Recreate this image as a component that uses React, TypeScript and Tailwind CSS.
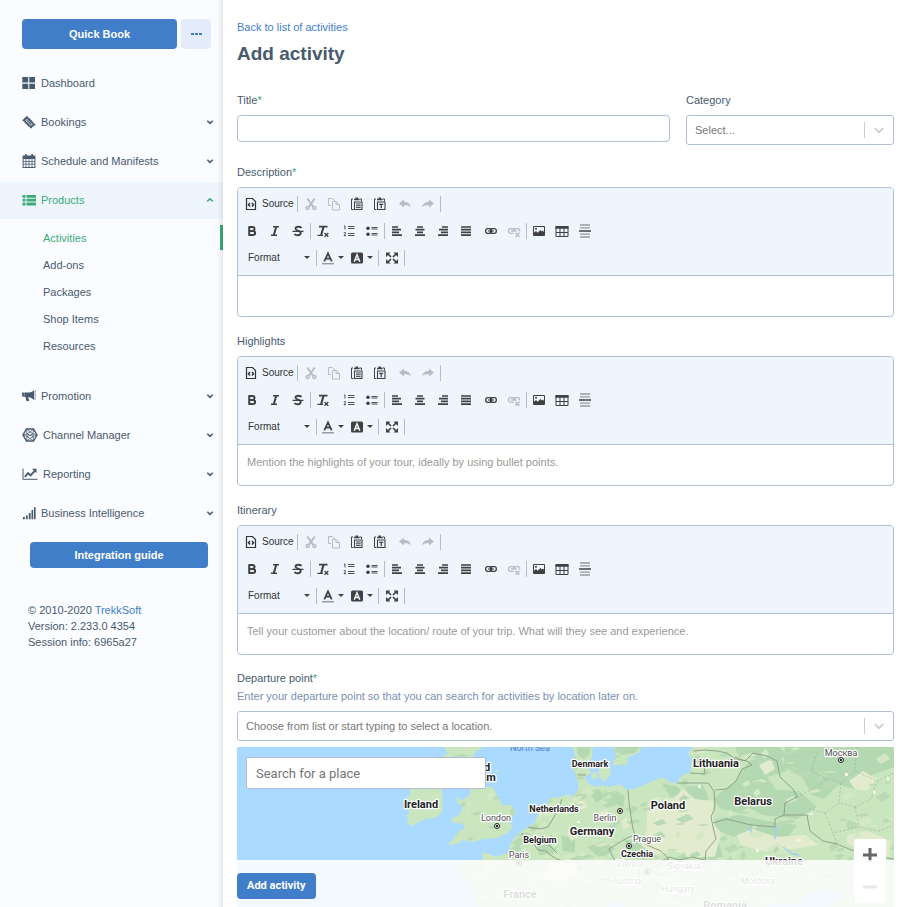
import React from "react";

type IconProps = { children: React.ReactNode; size?: string; box?: string };

const Glyph = ({ children, size = "h-3.5 w-3.5", box = "0 0 14 14" }: IconProps) => (
  <svg viewBox={box} className={`${size} shrink-0`} fill="currentColor" aria-hidden="true">
    {children}
  </svg>
);

const Chevron = ({ up = false }: { up?: boolean }) => (
  <svg viewBox="0 0 8 8" className="h-2 w-2 shrink-0" fill="none" stroke="currentColor" strokeWidth="1.5" aria-hidden="true">
    <path d={up ? "M1.3 5.4 4 2.8l2.7 2.6" : "M1.3 2.8 4 5.4l2.7-2.6"} />
  </svg>
);

/* ---------- sidebar icons ---------- */

const DashboardIcon = () => (
  <Glyph>
    <path d="M.3 1h5.900v5.500H.3zM7.300 1H13v5.500H7.300zM.3 7.700h5.900V13H.3zM7.300 7.700H13V13H7.300z" />
  </Glyph>
);

const TicketIcon = () => (
  <Glyph>
    <path
      fillRule="evenodd"
      d="M5.200 .8 .3 5.200l1 1.200c.8-.3 1.500.5 1.100 1.200L9 13.600l1.200-.9c-.3-.8.5-1.500 1.200-1.100l2.200-2L12.500 8.500c-.8.3-1.500-.4-1.100-1.200L7.200 3c-.8.3-1.400-.4-1.100-1.100zM5 3.900 3.300 5.400l5.600 5.400 1.800-1.600z"
    />
    <path d="M5.200 4.800 4.300 5.600 8.900 10l1-.9z" />
  </Glyph>
);

const CalendarIcon = () => (
  <Glyph>
    <path
      fillRule="evenodd"
      d="M3 0h1.600v1.500h4.800V0H11v1.500h2.400V14H.6V1.500H3zM1.600 5v2h2V5zm2.800 0v2h2.200V5zm3 0v2h2.200V5zm3 0v2h2V5zM1.600 7.800v2h2v-2zm2.800 0v2h2.200v-2zm3 0v2h2.200v-2zm3 0v2h2v-2zM1.600 10.600v2.300h2v-2.300zm2.800 0v2.300h2.200v-2.300zm3 0v2.300h2.200v-2.300zm3 0v2.300h2v-2.300z"
    />
  </Glyph>
);

const ListIcon = () => (
  <Glyph>
    <path d="M.5 2h3v2.800h-3zM4.500 2H14v2.800H4.500zM.5 5.800h3v2.800h-3zM4.500 5.800H14v2.800H4.500zM.5 9.600h3v2.800h-3zM4.500 9.600H14v2.800H4.500z" />
  </Glyph>
);

const MegaphoneIcon = () => (
  <Glyph>
    <path d="M0 4.400c0-.6.4-.9.9-.9h1v4.200h-1c-.5 0-.9-.3-.9-.9zM2.300 3.500h3.300C8.300 3.500 10.500 2.600 12 1.200v9.800C10.500 9.600 8.600 8.300 6.200 8l.3 1.600.8 1.800c-1 1-2.500.9-3 .3L3.500 8H2.300z" />
    <path d="M12.600 1h1v10.300h-1z" opacity=".6" />
  </Glyph>
);

const NetworkIcon = () => (
  <svg viewBox="0 0 16 14" className="h-3.5 w-4 shrink-0" fill="none" stroke="currentColor" aria-hidden="true">
    <path strokeWidth="1.400" d="M4.500 1h7L15 7l-3.500 6h-7L1 7z" />
    <path
      strokeWidth=".8"
      d="M4.500 1 8 4l3.500-3M15 7l-4-1.200L11.500 1M15 7l-4 1.500.5 4.500L8 10.500 4.500 13 5 8.500 1 7l4-1.200L4.500 1M5 5.800 8 4l3 1.800v2.700l-3 2-3-2zM5 5.800l6 2.700M11 5.800l-6 2.700"
    />
  </svg>
);

const LineChartIcon = () => (
  <svg viewBox="0 0 16 14" className="h-3.5 w-4 shrink-0" fill="none" stroke="currentColor" aria-hidden="true">
    <path d="M1 1.500v10.800h14.500" />
    <path strokeWidth="1.900" d="m2.800 9.800 3.400-3.600 2.300 2.200 4.300-4.500" />
    <path fill="currentColor" stroke="none" d="M10 1.800H14.500v4.500z" />
  </svg>
);

const SignalIcon = () => (
  <Glyph>
    <path d="M1 11h1.800v2.300H1zM3.900 9.500h1.800v3.800H3.900zM6.800 7h1.800v6.300H6.800zM9.500 4h1.700v9.300H9.500zM12 1.200h1.600v12.100H12z" />
  </Glyph>
);

/* ---------- sidebar ---------- */

type NavItem = { label: string; icon: React.ReactNode; leaf?: boolean };

const TOP_ITEMS: NavItem[] = [
  { label: "Dashboard", icon: <DashboardIcon />, leaf: true },
  { label: "Bookings", icon: <TicketIcon /> },
  { label: "Schedule and Manifests", icon: <CalendarIcon /> },
];

const LOWER_ITEMS: NavItem[] = [
  { label: "Promotion", icon: <MegaphoneIcon /> },
  { label: "Channel Manager", icon: <NetworkIcon /> },
  { label: "Reporting", icon: <LineChartIcon /> },
  { label: "Business Intelligence", icon: <SignalIcon /> },
];

const PRODUCT_ITEMS = ["Add-ons", "Packages", "Shop Items", "Resources"];

const NavRow = ({ item }: { item: NavItem }) => (
  <li>
    <a href="#" className="flex h-[37px] items-center pr-[9px] pb-0.5 pl-[22px]">
      {item.icon}
      <span className="ml-[5px] flex-1">{item.label}</span>
      {!item.leaf && <Chevron />}
    </a>
  </li>
);

const Sidebar = () => (
  <aside className="relative w-[223px] shrink-0 bg-[#fbfcff] pt-[19px]">
    <div className="flex gap-1 pr-3 pl-[22px]">
      <button className="h-[30px] flex-1 rounded bg-[#407ec9] font-bold text-white">Quick Book</button>
      <button aria-label="More" className="flex h-[30px] w-[30px] items-center justify-center gap-px rounded bg-[#e4ebfa] text-[#407ec9]">
        <span className="h-0.5 w-[3px] bg-current" />
        <span className="h-0.5 w-[3px] bg-current" />
        <span className="h-0.5 w-[3px] bg-current" />
      </button>
    </div>
    <nav className="mt-4">
      <ul className="flex flex-col gap-0.5">
        {TOP_ITEMS.map((item) => (
          <NavRow key={item.label} item={item} />
        ))}
        <li className="text-[#3dab78]">
          <a href="#" className="flex h-[37px] items-center bg-[#eef5fd] pr-[9px] pb-0.5 pl-[22px]">
            <ListIcon />
            <span className="ml-[5px] flex-1">Products</span>
            <Chevron up />
          </a>
          <ul className="flex flex-col gap-0.5 pt-1.5 pb-[18px]">
            <li>
              <a href="#" className="flex h-[25px] items-center border-r-[3px] border-[#3dab78] pl-[43px]">
                Activities
              </a>
            </li>
            {PRODUCT_ITEMS.map((label) => (
              <li key={label}>
                <a href="#" className="flex h-[25px] items-center pl-[43px] text-[#485a6e]">
                  {label}
                </a>
              </li>
            ))}
          </ul>
        </li>
        {LOWER_ITEMS.map((item) => (
          <NavRow key={item.label} item={item} />
        ))}
      </ul>
    </nav>
    <div className="mt-[10px] pr-[15px] pl-[30px]">
      <button className="h-[26px] w-full rounded bg-[#407ec9] font-bold text-white">Integration guide</button>
    </div>
    <div className="mt-[34px] pl-7">
      <p>
        © 2010-2020{" "}
        <a href="#" className="text-[#407ec9]">
          TrekkSoft
        </a>
      </p>
      <p>Version: 2.233.0 4354</p>
      <p>Session info: 6965a27</p>
    </div>
    <div className="pointer-events-none absolute inset-y-0 right-0 w-1.5 bg-linear-to-r from-transparent to-black/8" />
  </aside>
);

/* ---------- editor toolbar ---------- */

const Tool = ({ label, off = false, children }: { label: string; off?: boolean; children: React.ReactNode }) => (
  <button
    type="button"
    aria-label={label}
    className={`flex h-[23px] w-[23px] items-center justify-center ${off ? "opacity-30" : ""}`}
  >
    {children}
  </button>
);

const Divider = () => <span className="ml-px h-4 w-px bg-[#bcbcbc]" />;

const Caret = () => <span className="border-x-[3px] border-t-[3px] border-x-transparent border-t-current" />;

const I = ({ children }: { children: React.ReactNode }) => (
  <svg viewBox="0 0 14 14" className="h-3.5 w-3.5" fill="none" stroke="currentColor" aria-hidden="true">
    {children}
  </svg>
);

const Lines = ({ d }: { d: string }) => (
  <I>
    <path d={d} strokeWidth="1.700" />
  </I>
);

const Clipboard = ({ children }: { children: React.ReactNode }) => (
  <I>
    <path d="M3 2H1.500v10.500H3.500M9.500 2H11.500v2" />
    <path d="M4 2.500h5.500M5.500 1.200h2.500" strokeWidth="1.600" />
    <path d="M4.500 5h7.500v7.500H4.500z" strokeWidth="1.100" />
    {children}
  </I>
);

const Arrow = () => <path d="M1 6.500 6 2.600v2.400c4 0 6 1.500 7 5.200C11.500 8.500 9 8.200 6 8.200v2.400z" fill="currentColor" stroke="none" />;

const Toolbar = ({ id }: { id: string }) => (
  <div className="border-b border-[#b0bfd6] bg-[#eef5fd] pt-0.5 pb-1 pl-0.5 text-[#404040]">
    <div className="flex h-[27px] items-center">
      <button type="button" className="flex h-[23px] w-14 items-center gap-1 pl-1 text-[#333]">
        <I>
          <path d="M2.500 1.500h6l3 3v8h-9z" strokeWidth="1.200" />
          <path d="M6 6 4.500 7.700 6 9.400M8 6l1.500 1.700L8 9.400" strokeWidth="1.500" />
        </I>
        <span className="text-[10px]">Source</span>
      </button>
      <Divider />
      <span className="w-px" />
      <Tool label="Cut" off>
        <I>
          <path d="m3.300 1.500 6 8.500M10.700 1.500l-6 8.500" strokeWidth="2" />
          <circle cx="3.600" cy="11" r="1.500" strokeWidth="1.500" />
          <circle cx="10.400" cy="11" r="1.500" strokeWidth="1.500" />
        </I>
      </Tool>
      <Tool label="Copy" off>
        <I>
          <path d="M4 8.500H1.500v-7h4L8 4M5.500 4.500H9L12.500 7.500v5.500H5.500zM9 4.500v3h3" />
        </I>
      </Tool>
      <Tool label="Paste">
        <Clipboard>
          <path d="M6 7h4.700M6 8.800h4.700M6 10.600h4.700" />
        </Clipboard>
      </Tool>
      <Tool label="Paste as plain text">
        <Clipboard>
          <path d="M6.200 7.300h4M8.200 7.300v4" strokeWidth="1.300" />
        </Clipboard>
      </Tool>
      <span className="w-0.5" />
      <Tool label="Undo" off>
        <I>
          <Arrow />
        </I>
      </Tool>
      <Tool label="Redo" off>
        <I>
          <g transform="matrix(-1 0 0 1 14 0)">
            <Arrow />
          </g>
        </I>
      </Tool>
      <Divider />
    </div>

    <div className="flex h-[27px] items-center">
      <Tool label="Bold">
        <I>
          <path d="M4.200 2.300v9.400M4 3h3.500c2.700 0 2.700 3.900 0 3.900H4M4 11h3.800c3.200 0 3.200-4.100 0-4.100" strokeWidth="2" />
        </I>
      </Tool>
      <Tool label="Italic">
        <I>
          <path d="M5 2.700h6M3 11.300h6" strokeWidth="1.400" />
          <path d="M8.200 3 5.800 11" strokeWidth="2" />
        </I>
      </Tool>
      <Tool label="Strikethrough">
        <I>
          <path d="M10.500 4C9.500 2.200 4.700 2.200 4.500 4.600 4.400 6.800 9.900 6.500 9.700 9.200 9.500 11.900 4.600 11.700 3.500 9.900" strokeWidth="1.900" />
          <path d="M1.500 7.300h11" strokeWidth="1.300" />
        </I>
      </Tool>
      <Divider />
      <Tool label="Remove format">
        <I>
          <path d="M3 2.700h8.500" strokeWidth="1.800" />
          <path d="M7.500 2.700 5.200 11" strokeWidth="2.100" />
          <path d="M1.500 11.300H7" strokeWidth="1.300" />
          <path d="m8.500 9 3.800 3.800M12.300 9l-3.800 3.800" strokeWidth="1.300" />
        </I>
      </Tool>
      <span className="w-[3px]" />
      <Tool label="Numbered list">
        <I>
          <path d="M6 2.500h6.500M6 4.500h6.500M6 9.500h6.500M6 11.500h6.500" strokeWidth=".9" />
          <path d="M2 2h1v3.500M1.800 8.700h1.700v1L2 11.700h2" strokeWidth=".9" />
        </I>
      </Tool>
      <Tool label="Bulleted list">
        <I>
          <path d="M6.500 3.500h6M6.500 5h6M6.500 9.500h6M6.500 11h6" strokeWidth=".9" />
          <circle cx="3" cy="4.200" r="1.800" fill="currentColor" stroke="none" />
          <circle cx="3" cy="10.200" r="1.800" fill="currentColor" stroke="none" />
        </I>
      </Tool>
      <Divider />
      <Tool label="Align left">
        <Lines d="M2 3h6M2 5.700h9M2 8.400h7M2 11.100h10" />
      </Tool>
      <Tool label="Center">
        <Lines d="M4 3h6M2.500 5.700h9M4 8.400h6M2 11.100h10" />
      </Tool>
      <Tool label="Align right">
        <Lines d="M6 3h6M3 5.700h9M5 8.400h7M2 11.100h10" />
      </Tool>
      <Tool label="Justify">
        <Lines d="M2 3h10M2 5.700h10M2 8.400h10M2 11.100h10" />
      </Tool>
      <span className="w-0.5" />
      <Tool label="Link">
        <I>
          <rect x="1.700" y="4.700" width="6" height="4.600" rx="2" strokeWidth="1.300" />
          <rect x="6.300" y="4.700" width="6" height="4.600" rx="2" strokeWidth="1.300" />
          <path d="M4 7h6" strokeWidth="1.200" />
        </I>
      </Tool>
      <Tool label="Unlink" off>
        <I>
          <path d="M6.500 9.300H3.700a2 2 0 0 1 0-4.600h2a2 2 0 0 1 2 2M6.500 6.700a2 2 0 0 1 2-2h2a2 2 0 0 1 2 2.800M4 7h5.500" strokeWidth="1.300" />
          <path d="m8.500 8.800 4 4M12.500 8.800l-4 4" strokeWidth="1.500" />
        </I>
      </Tool>
      <Divider />
      <Tool label="Image">
        <I>
          <path d="M1.500 2.500h11v9h-11z" />
          <path d="M2 11.500V8.800L4 7l1.700 1.700L8.500 6l1.200 1.500L11 6.500l1 1.500v3.500z" fill="currentColor" stroke="none" />
          <circle cx="4" cy="4.800" r="1" fill="currentColor" stroke="none" />
        </I>
      </Tool>
      <Tool label="Table">
        <I>
          <path d="M1 2.500h12v10H1zM5 4v8.500M9 4v8.500M1 8.500h12" />
          <path d="M.5 3.300h13" strokeWidth="2.800" />
        </I>
      </Tool>
      <Tool label="Horizontal line">
        <I>
          <path d="M2 1h10M2 3.800h10M2 10.200h10M2 13h10" strokeWidth="1.300" opacity=".5" />
          <path d="M1 7h12" strokeWidth="1.500" />
        </I>
      </Tool>
    </div>

    <div className="flex h-[27px] items-center">
      <div className="relative w-[75px]">
        <select aria-label={`${id} paragraph format`} className="block w-full appearance-none bg-transparent pl-2 text-[10px] text-[#333]">
          <option>Format</option>
        </select>
        <span className="pointer-events-none absolute inset-y-0 right-[5px] flex items-center">
          <Caret />
        </span>
      </div>
      <Divider />
      <button type="button" aria-label="Text color" className="flex h-[23px] w-[29px] items-center justify-end gap-[3px] pr-0.5">
        <I>
          <path d="m3.300 10.300 3.700-8 3.700 8M4.800 7.600h4.400" strokeWidth="1.700" />
          <path d="M1 12.700h12" strokeWidth="1.400" opacity=".5" />
        </I>
        <Caret />
      </button>
      <button type="button" aria-label="Background color" className="flex h-[23px] w-[29px] items-center justify-end gap-[3px] pr-0.5">
        <I>
          <rect x="1" y="1.500" width="12" height="11" rx="1.500" fill="currentColor" stroke="none" />
          <path d="m4.200 10.700 2.800-7 2.800 7M5.300 8.500h3.400" stroke="#eef5fd" strokeWidth="1.500" />
        </I>
        <Caret />
      </button>
      <span className="w-0.5" />
      <Divider />
      <span className="w-px" />
      <Tool label="Maximize">
        <I>
          <path d="m2.500 2.500 3.500 3.500M11.500 2.500 8 6M2.500 11.500 6 8M11.500 11.500 8 8" strokeWidth="1.700" />
          <path d="M1 1.500h4.500L1 6zM13 1.500V6L8.500 1.500zM1 12.500V8l4.500 4.500zM13 12.500H8.500L13 8z" fill="currentColor" stroke="none" />
        </I>
      </Tool>
      <Divider />
    </div>
  </div>
);

const Star = () => <span className="text-[#3dab78]">*</span>;

const EditorField = ({ id, label, required = false, hint }: { id: string; label: string; required?: boolean; hint?: string }) => (
  <div>
    <label htmlFor={id} className="mb-[7px] block">
      {label}
      {required && <Star />}
    </label>
    <div className="overflow-hidden rounded border border-[#b0bfd6]">
      <Toolbar id={label} />
      <textarea
        id={id}
        placeholder={hint}
        className="block h-10 w-full resize-none px-[9px] py-[9px] leading-4 outline-none placeholder:text-[#999]"
      />
    </div>
  </div>
);

const SelectBox = ({ id, text }: { id: string; text: string }) => (
  <div className="relative">
    <select id={id} className="block h-[30px] w-full appearance-none rounded-[3px] border border-[#b0bfd6] bg-white pl-2 text-[#777]">
      <option>{text}</option>
    </select>
    <span className="pointer-events-none absolute inset-y-0 right-px flex items-center text-[#ccc]">
      <span className="h-4 w-px bg-current" />
      <svg viewBox="0 0 12 12" className="mx-2 h-3 w-3" fill="none" stroke="currentColor" strokeWidth="1.700" aria-hidden="true">
        <path d="M1.700 4 6 8.200 10.300 4" />
      </svg>
    </span>
  </div>
);

/* ---------- map ---------- */

const LAND = [
  "M207 0 211 6 206 9 217 19 240 14 236 7 246 0z",
  "M234 40 233 47 226 53 219 50 221 57 226 59 223 67 215 71 214 75 226 77 228 81 222 84 217 91 210 98 220 97 226 93 236 95 246 92 260 91 271 86 276 79 272 76 278 66 275 58 265 58 261 50 256 40z",
  "M173 40 173 48 169 50 175 55 168 60 173 65 168 70 173 72 169 75 175 79 186 73 200 70 205 65 206 53 204 40z",
  "M245 105 250 106 258 110 272 106 273 98 277 91 283 85 291 80 298 75 301 68 305 60 310 58 312 51 323 50 333 47 334 52 341 43 341 36 338 26 335 20 338 8 336 0 356 0 355 10 351 18 354 26 348 30 352 37 360 40 365 38 373 40 383 37 390 43 400 41 413 35 426 30 432 35 440 36 445 28 453 26 455 13 451 6 456 0 657 0 657 240 245 240 241 160 238 150 233 136 221 130 226 124 219 117 230 113 246 113z",
  "M376 0 379 8 375 18 390 18 391 10 401 6 406 0z",
  "M361 23 371 17 374 24 372 30 366 35 362 29zM354 26 360 25 360 32 355 32zM258 24 260 22 262 26zM311 46 314 44 314 46z",
];

const FOREST = [
  "M340 0l14 0-2 8-6 4-5-4zM377 0l25 0-4 6-14 2zM352 44l10-2 6 8-9 6zM374 46l14 2-2 12-10-4z",
  "M425 36l16 4 6 8-14 2zM448 40l18-2 6 14-16 6zM427 58l9-6 6 10-10 4z",
  "M476 52l22-18 14-20 30-8 8 18-20 6 10 14-22 10-14 12-20-4zM498 0l44 0 10 10-24 2-26-2z",
  "M548 0l109 0 0 20-22 8-16 14-18-4-14 14-12-4-10-18-18-10zM528 42l34 2 18 16-20 12-34-4-16-8z",
  "M478 72l24-4 28 6 30 4-10 14-24-6-30 4-18-8z",
  "M300 96l12-6 10 8-8 12-12-2zM324 88l14 4 0 14-12-2zM350 100l16-6 12 8-14 10zM386 92l22 4 12 14-20 2z",
  "M466 96l16 0 4 14-22 2z",
];

const FIELDS = [
  "M410 58l10-8 16 2 10-10 12 10 18 2 0 22 8 10-6 24-26 0-14-6-22 4-12-10 6-16z",
  "M330 86l6-4 6 8-8 4zM360 66l10-4 2 8-9 2zM340 54l8 0 2 7-8 2zM384 74l6-4 2 10-6 2z",
  "M500 88l16-6 22 8 30-2 14 10-26 4-30 2-22-6zM610 88l20-4 24 10-2 16-22-2-20-12z",
  "M612 34l14-10 14 8-10 12-12-2zM522 18l12-6 4 10-10 6zM312 116l20-4 14 10-22 14-18-6z",
];

/* Small irregular patches of vegetation, the same on every render. */
const speckles = (seed: number, count: number) => {
  let s = seed;
  const next = () => {
    s = (s * 16807) % 2147483647;
    return s / 2147483647;
  };
  const parts: string[] = [];
  for (let i = 0; i < count; i++) {
    const x = Math.round(215 + next() * 440);
    const y = Math.round(next() * 160);
    const w = Math.round(3 + next() * 9);
    const h = Math.round(1 + next() * 5);
    parts.push(`M${x} ${y}l${w} ${-h} ${Math.round(w / 2)} ${h} ${-w} ${Math.round(h * 0.8)}z`);
  }
  return parts.join("");
};

const DARK_SPECKLES = speckles(4127, 190);
const LIGHT_SPECKLES = speckles(9311, 90);

type Place = { name: string; x: number; y: number; size: number; country?: boolean };

const PLACES: Place[] = [
  { name: "Ireland", x: 184, y: 61, size: 11, country: true },
  { name: "Denmark", x: 353, y: 20, size: 9, country: true },
  { name: "Lithuania", x: 479, y: 20, size: 11, country: true },
  { name: "Netherlands", x: 317, y: 65, size: 9, country: true },
  { name: "Poland", x: 431, y: 62, size: 11, country: true },
  { name: "Belarus", x: 516, y: 58, size: 11, country: true },
  { name: "Germany", x: 355, y: 88, size: 11, country: true },
  { name: "Belgium", x: 303, y: 96, size: 9, country: true },
  { name: "Czechia", x: 400, y: 110, size: 9, country: true },
  { name: "Ukraine", x: 547, y: 118, size: 11, country: true },
  { name: "France", x: 283, y: 151, size: 11, country: true },
  { name: "Romania", x: 488, y: 162, size: 11, country: true },
  { name: "Austria", x: 390, y: 137, size: 9 },
  { name: "Slovakia", x: 447, y: 122, size: 9 },
  { name: "Hungary", x: 441, y: 145, size: 9 },
  { name: "Moldova", x: 521, y: 137, size: 9 },
  { name: "London", x: 259, y: 74, size: 9 },
  { name: "Berlin", x: 368, y: 74, size: 9 },
  { name: "Prague", x: 410, y: 95, size: 9 },
  { name: "Paris", x: 282, y: 111, size: 9 },
  { name: "Vienna", x: 393, y: 120, size: 9 },
  { name: "Москва", x: 604, y: 9, size: 9 },
];

const DOTS = [
  [260, 79],
  [383, 64],
  [392, 99],
  [282, 116],
  [410, 125],
  [604, 13],
];

const EuropeMap = () => (
  <svg viewBox="0 0 657 240" preserveAspectRatio="xMinYMin slice" className="block h-60 w-full bg-[#aadaff]" role="img" aria-label="Map">
    <clipPath id="land">
      <path d={LAND.join("")} />
    </clipPath>
    <g fill="#cae6be">
      {LAND.map((d) => (
        <path key={d} d={d} />
      ))}
    </g>
    <g clipPath="url(#land)">
      <g fill="#b4d8b1">
        {FOREST.map((d) => (
          <path key={d} d={d} />
        ))}
      </g>
      <g fill="#e3ebce">
        {FIELDS.map((d) => (
          <path key={d} d={d} />
        ))}
      </g>
      <path fill="#d3e8c4" d={LIGHT_SPECKLES} />
      <path fill="#b9dab5" d={DARK_SPECKLES} />
    </g>
    <path fill="#aadaff" d="M530 160 546 154 560 158 574 146 590 142 606 148 600 152 590 162 600 175 590 200 520 200zM370 158l14-4 10 12 30 30-20 0z" />
    <g fill="none" stroke="#8a9c86" strokeWidth=".9">
      <path d="M391 43 392 55 394 70 396 82 398 88 390 91 372 102 377 112 390 118 403 116 412 122 425 116 432 112 424 104 410 98 402 92 398 88" />
      <path d="M425 114 432 110 442 113 455 110 468 113 469 104 479 92 476 80 474 70 478 60 477 44 471 36 440 36M453 26 468 27 467 18 456 13M456 4 468 3 480 4 490 6 498 12 510 14 515 18 505 22 499 34 490 42 478 43" />
      <path d="M498 10 508 14 516 6 530 9 540 14 543 30 556 42 560 50 548 56 547 68 538 72 538 80 514 78 490 72 476 76M547 68 570 68 573 84 586 94 600 97 612 102 630 108 657 112" />
      <path d="M285 86 287 92 296 96 301 103 309 104 313 108 320 112 332 116M291 80 303 82 311 80 317 70 322 60 325 52M314 88 312 98 320 106M341 28 349 28M404 118 400 130 380 134 360 132M412 122 424 128 450 122 470 114" />
      <path
        strokeDasharray="2 2"
        opacity=".5"
        d="M560 50 576 42 590 32 604 36 618 24 640 34 657 26M580 6 574 24 590 32M604 36 602 56 588 66 572 62M618 60 602 56M618 60 634 52 640 34M618 60 622 80 642 84 657 78M588 66 596 86 622 80M600 97 596 86M620 0 618 24"
      />
    </g>
    <g fill="#f1f4ea">
      <path d="M461 38h3v3h-3zM608 26h3v3h-3zM519 102h3v3h-3zM572 66h4v2h-4zM636 44h3v3h-3zM650 30h2v4h-2zM560 92h4v2h-4zM340 74h3v2h-3z" />
    </g>
    <path fill="none" stroke="#9fd0f0" strokeWidth="1.500" d="M538 92v-9l3-4M546 100l10 7 6 1M515 86l-3-6" />
    <g fontFamily="Roboto, sans-serif" textAnchor="middle" stroke="#fff" strokeWidth="2.500" strokeLinejoin="round" paintOrder="stroke">
      {PLACES.map((p) => (
        <text key={p.name} x={p.x} y={p.y} fontSize={p.size} fontWeight={p.country ? 700 : 400} fill={p.country ? "#222" : "#505050"}>
          {p.name}
        </text>
      ))}
      <text x="250" y="24" fontSize="11" fontWeight="700" fill="#222">
        d
      </text>
      <text x="254" y="34" fontSize="11" fontWeight="700" fill="#222">
        m
      </text>
    </g>
    <text x="293" y="4" fontSize="9" fontFamily="Roboto, sans-serif" textAnchor="middle" fill="#4a86c5">
      North Sea
    </text>
    {DOTS.map(([x, y]) => (
      <g key={`${x}-${y}`}>
        <circle cx={x} cy={y} r="2.500" fill="#fff" stroke="#222" />
        <circle cx={x} cy={y} r="1.200" fill="#222" />
      </g>
    ))}
  </svg>
);

/* ---------- page ---------- */

export default function App() {
  return (
    <div className="flex h-screen overflow-hidden bg-white font-['Liberation_Sans',Arial,sans-serif] text-[11px] leading-4 text-[#485a6e]">
      <Sidebar />
      <main className="relative min-w-0 flex-1 overflow-hidden pt-[19px] pr-2 pl-3.5">
        <a href="#" className="block text-[#407ec9]">
          Back to list of activities
        </a>
        <h1 className="mt-[5px] text-[19px] leading-7 font-bold">Add activity</h1>

        <div className="mt-6 flex gap-4">
          <div className="flex-1">
            <label htmlFor="title" className="mb-[7px] block">
              Title
              <Star />
            </label>
            <input id="title" className="block h-[27px] w-full rounded border border-[#b0bfd6] px-2 outline-none" />
          </div>
          <div className="w-[208px]">
            <label htmlFor="category" className="mb-[7px] block">
              Category
            </label>
            <SelectBox id="category" text="Select..." />
          </div>
        </div>

        <div className="mt-[19px] flex flex-col gap-4">
          <EditorField id="description" label="Description" required />
          <EditorField id="highlights" label="Highlights" hint="Mention the highlights of your tour, ideally by using bullet points." />
          <EditorField id="itinerary" label="Itinerary" hint="Tell your customer about the location/ route of your trip. What will they see and experience." />
        </div>

        <label htmlFor="departure" className="mt-[15px] block">
          Departure point
          <Star />
        </label>
        <p className="mt-0.5 mb-[7px] text-[#7a8fb0]">
          Enter your departure point so that you can search for activities by location later on.
        </p>
        <SelectBox id="departure" text="Choose from list or start typing to select a location." />

        <div className="relative mt-1.5">
          <EuropeMap />
          <input
            aria-label="Search for a place"
            placeholder="Search for a place"
            className="absolute top-2.5 left-[9px] h-8 w-60 rounded-xs border border-[#b0bfd6] bg-white px-[9px] font-[Roboto,sans-serif] text-[13px] placeholder:text-[#757575]"
          />
          <div className="absolute top-[92px] right-2 flex w-8 flex-col divide-y divide-[#e6e6e6] rounded-xs bg-white text-[#666]">
            <button aria-label="Zoom in" className="flex h-8 items-center justify-center">
              <svg viewBox="0 0 16 16" className="h-4 w-4" stroke="currentColor" strokeWidth="3" aria-hidden="true">
                <path d="M8 1v14M1 8h14" />
              </svg>
            </button>
            <button aria-label="Zoom out" className="flex h-8 items-center justify-center">
              <svg viewBox="0 0 16 16" className="h-4 w-4" stroke="currentColor" strokeWidth="3" aria-hidden="true">
                <path d="M1 8h14" />
              </svg>
            </button>
          </div>
        </div>

        <div className="absolute inset-x-0 bottom-0 bg-white/85 pt-[13px] pr-2 pb-2 pl-3.5">
          <button className="h-[26px] rounded bg-[#407ec9] px-2.5 font-[Roboto,sans-serif] font-bold text-white">Add activity</button>
        </div>
      </main>
    </div>
  );
}
